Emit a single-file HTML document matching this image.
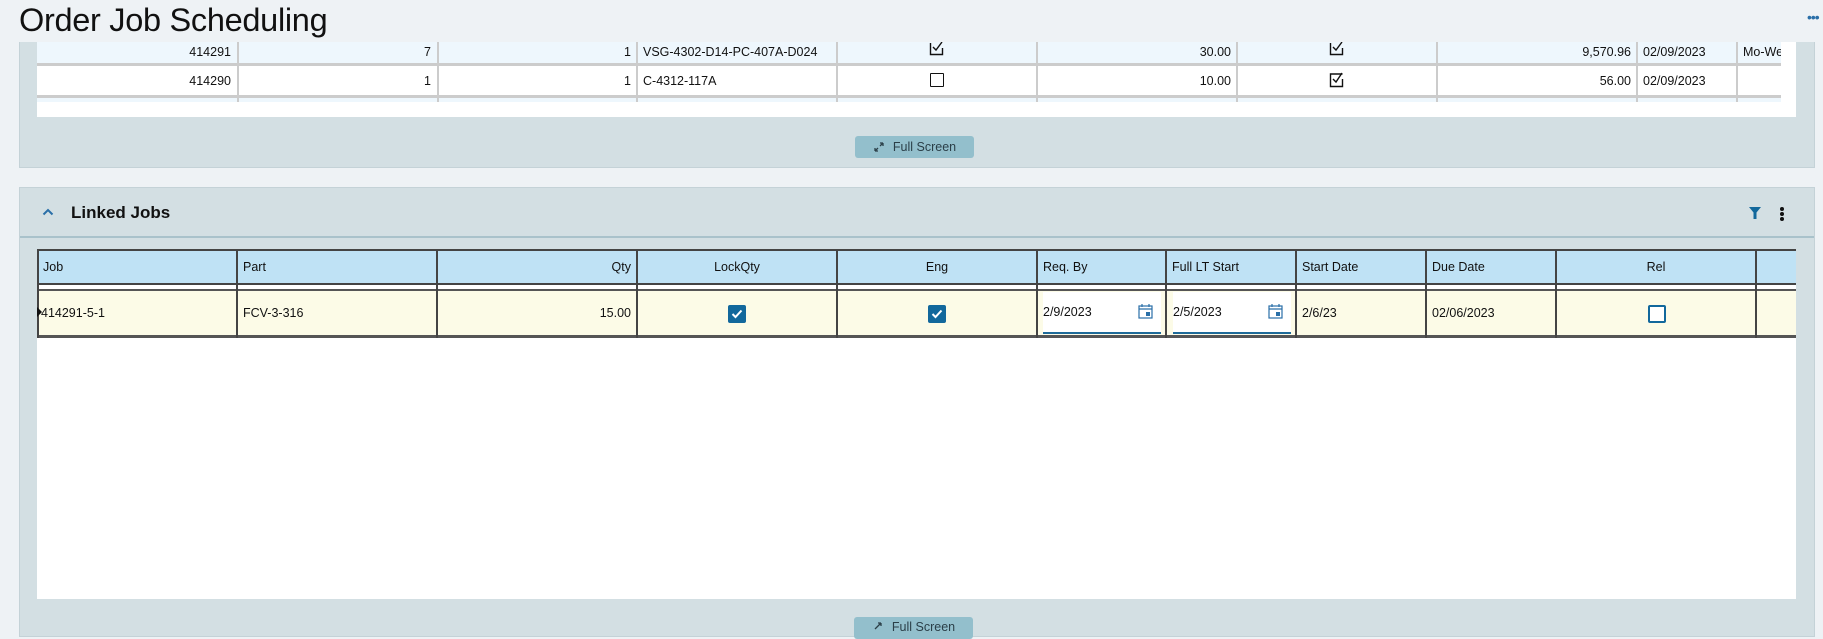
<!DOCTYPE html>
<html><head><meta charset="utf-8"><style>
*{box-sizing:border-box;margin:0;padding:0}
body{width:1823px;height:630px;overflow:hidden;background:#eef2f5;font-family:"Liberation Sans",sans-serif;font-size:12.5px;color:#111;position:relative}
.a{position:absolute}
.title{left:19px;top:0;font-size:32.5px;letter-spacing:-0.3px;color:#111;line-height:40px}
.panel{background:#d3dfe3;border:1px solid #c4d2d7}
.cell{position:absolute;display:flex;align-items:center;padding:0 6px;white-space:nowrap;overflow:hidden}
.r{justify-content:flex-end}.c{justify-content:center}
.btn{background:#93bfcc;border-radius:3px;color:#2b3f48;font-size:12.5px;display:flex;align-items:center;justify-content:center;gap:8px}
.cb{width:18px;height:18px;background:#12689c;border-radius:2px;display:flex;align-items:center;justify-content:center}
</style></head><body>
<div class="a title">Order Job Scheduling</div>
<div class="a" style="left:1807px;top:14px;color:#2a6fa8;font-size:14px;letter-spacing:-1px;line-height:6px">•••</div>

<!-- top panel -->
<div class="a panel" style="left:19px;top:42px;width:1796px;height:126px;border-top:none"></div>
<div class="a" style="left:37px;top:42px;width:1759px;height:75px;background:#fff"></div>
<div class="a" style="left:37px;top:42px;width:1744px;height:21px;background:#eef7fd"></div>
<div class="a" style="left:37px;top:63px;width:1744px;height:3px;background:#cccccc"></div>
<div class="a" style="left:37px;top:95px;width:1744px;height:3px;background:#cccccc"></div>
<div class="a" style="left:37px;top:98px;width:1744px;height:4px;background:#eef7fd"></div>
<div id="tvl"></div>
<div class="cell r" style="left:37px;top:38px;width:200px;height:27px">414291</div>
<div class="cell r" style="left:237px;top:38px;width:200px;height:27px">7</div>
<div class="cell r" style="left:437px;top:38px;width:200px;height:27px">1</div>
<div class="cell" style="left:637px;top:38px;width:200px;height:27px">VSG-4302-D14-PC-407A-D024</div>
<div class="cell r" style="left:1037px;top:38px;width:200px;height:27px">30.00</div>
<div class="cell r" style="left:1437px;top:38px;width:200px;height:27px">9,570.96</div>
<div class="cell" style="left:1637px;top:38px;width:100px;height:27px">02/09/2023</div>
<div class="cell" style="left:1737px;top:38px;width:44px;height:27px">Mo-We</div>
<div class="cell r" style="left:37px;top:66px;width:200px;height:29px">414290</div>
<div class="cell r" style="left:237px;top:66px;width:200px;height:29px">1</div>
<div class="cell r" style="left:437px;top:66px;width:200px;height:29px">1</div>
<div class="cell" style="left:637px;top:66px;width:200px;height:29px">C-4312-117A</div>
<div class="cell r" style="left:1037px;top:66px;width:200px;height:29px">10.00</div>
<div class="cell r" style="left:1437px;top:66px;width:200px;height:29px">56.00</div>
<div class="cell" style="left:1637px;top:66px;width:100px;height:29px">02/09/2023</div>
<svg class="a" style="left:929px;top:42px" width="16" height="14"><path d="M1.5 1v11.5h12V6" fill="none" stroke="#111" stroke-width="1.4"/><path d="M4 5l3 3 6-8" fill="none" stroke="#111" stroke-width="1.4"/></svg>
<div class="a" style="left:930px;top:73px;width:14px;height:14px;border:1.5px solid #111;border-radius:1px"></div>
<svg class="a" style="left:1329px;top:42px" width="16" height="14"><path d="M1.5 1v11.5h12V6" fill="none" stroke="#111" stroke-width="1.4"/><path d="M4 5l3 3 6-8" fill="none" stroke="#111" stroke-width="1.4"/></svg>
<svg class="a" style="left:1329px;top:71px" width="16" height="17"><path d="M13.5 3H1.5v12.5h12V8" fill="none" stroke="#111" stroke-width="1.4"/><path d="M4 8l3 3 6-9" fill="none" stroke="#111" stroke-width="1.4"/></svg>
<div class="a btn" style="left:855px;top:136px;width:119px;height:22px"><svg width="12" height="12"><path d="M2 10l3-3M2 10V7M2 10h3M10 2L7 5M10 2v3M10 2H7" stroke="#2b3f48" stroke-width="1.3" fill="none"/></svg>Full Screen</div>

<!-- bottom panel -->
<div class="a panel" style="left:19px;top:187px;width:1796px;height:450px"></div>
<div class="a" style="left:20px;top:236px;width:1794px;height:2px;background:#a9c2cb"></div>
<svg class="a" style="left:42px;top:207px" width="12" height="10"><path d="M1.5 7.5L6 3l4.5 4.5" stroke="#2a6fa8" stroke-width="2" fill="none"/></svg>
<div class="a" style="left:71px;top:201px;font-size:17px;font-weight:bold;color:#111;line-height:24px">Linked Jobs</div>
<svg class="a" style="left:1749px;top:207px" width="12" height="12"><path d="M0 0h12L7.5 5.5V12h-3V5.5z" fill="#12689c"/></svg>
<div class="a" style="left:1780px;top:207px;width:4px;height:4px;border-radius:2px;background:#111"></div>
<div class="a" style="left:1780px;top:212px;width:4px;height:4px;border-radius:2px;background:#111"></div>
<div class="a" style="left:1780px;top:217px;width:4px;height:4px;border-radius:2px;background:#111"></div>

<div class="a" style="left:37px;top:249px;width:1759px;height:350px;background:#fff"></div>
<div class="a" style="left:37px;top:249px;width:1759px;height:36px;background:#bfe2f5;border-top:2px solid #444;border-bottom:2px solid #444"></div>
<div class="a" style="left:37px;top:289px;width:1759px;height:49px;background:#fcfbe7;border-top:2px solid #555;border-bottom:3px solid #555"></div>
<div id="bvl"></div>
<div class="cell" style="left:37px;top:251px;width:200px;height:32px">Job</div>
<div class="cell" style="left:237px;top:251px;width:200px;height:32px">Part</div>
<div class="cell r" style="left:437px;top:251px;width:200px;height:32px">Qty</div>
<div class="cell c" style="left:637px;top:251px;width:200px;height:32px">LockQty</div>
<div class="cell c" style="left:837px;top:251px;width:200px;height:32px">Eng</div>
<div class="cell" style="left:1037px;top:251px;width:129px;height:32px">Req. By</div>
<div class="cell" style="left:1166px;top:251px;width:130px;height:32px">Full LT Start</div>
<div class="cell" style="left:1296px;top:251px;width:130px;height:32px">Start Date</div>
<div class="cell" style="left:1426px;top:251px;width:130px;height:32px">Due Date</div>
<div class="cell c" style="left:1556px;top:251px;width:200px;height:32px">Rel</div>

<svg class="a" style="left:37px;top:307px" width="6" height="10"><path d="M0 0l5 5-5 5z" fill="#111"/></svg>
<div class="cell" style="left:37px;top:291px;width:200px;height:44px;padding-left:4px">414291-5-1</div>
<div class="cell" style="left:237px;top:291px;width:200px;height:44px">FCV-3-316</div>
<div class="cell r" style="left:437px;top:291px;width:200px;height:44px">15.00</div>
<div class="a cb" style="left:728px;top:305px"><svg width="12" height="10"><path d="M1.5 5l3 3 6-6.5" stroke="#fff" stroke-width="2" fill="none"/></svg></div>
<div class="a cb" style="left:928px;top:305px"><svg width="12" height="10"><path d="M1.5 5l3 3 6-6.5" stroke="#fff" stroke-width="2" fill="none"/></svg></div>
<div class="a" style="left:1043px;top:292px;width:118px;height:42px;background:#fff;border-bottom:2px solid #1e6a99;display:flex;align-items:center">2/9/2023</div>
<div class="a" style="left:1173px;top:292px;width:118px;height:42px;background:#fff;border-bottom:2px solid #1e6a99;display:flex;align-items:center">2/5/2023</div>
<svg class="a" style="left:1138px;top:303px" width="15" height="16"><rect x="1" y="3" width="13" height="12" fill="none" stroke="#2a6fa8" stroke-width="1.2"/><path d="M1 6h13M4 1v3M11 1v3" stroke="#2a6fa8" stroke-width="1.2"/><rect x="8" y="9" width="4" height="4" fill="#2a6fa8"/></svg>
<svg class="a" style="left:1268px;top:303px" width="15" height="16"><rect x="1" y="3" width="13" height="12" fill="none" stroke="#2a6fa8" stroke-width="1.2"/><path d="M1 6h13M4 1v3M11 1v3" stroke="#2a6fa8" stroke-width="1.2"/><rect x="8" y="9" width="4" height="4" fill="#2a6fa8"/></svg>
<div class="cell" style="left:1296px;top:291px;width:130px;height:44px">2/6/23</div>
<div class="cell" style="left:1426px;top:291px;width:130px;height:44px">02/06/2023</div>
<div class="a" style="left:1648px;top:305px;width:18px;height:18px;border:2px solid #12689c;border-radius:2px;background:#fff"></div>

<div class="a btn" style="left:854px;top:617px;width:119px;height:22px;align-items:flex-start;padding-top:3px"><svg width="12" height="12"><path d="M3 9l6-6M9 3v3M9 3H6" stroke="#2b3f48" stroke-width="1.3" fill="none"/></svg>Full Screen</div>

<script>
var t=document.getElementById('tvl'),h='';
[237,437,636,836,1036,1236,1436,1636,1736].forEach(function(x){h+='<div class="a" style="left:'+x+'px;top:42px;width:2px;height:60px;background:#cccccc"></div>'});
t.outerHTML=h;
var b=document.getElementById('bvl');h='';
[37,236,436,636,836,1036,1165,1295,1425,1555,1755].forEach(function(x){h+='<div class="a" style="left:'+x+'px;top:249px;width:2px;height:89px;background:#444"></div>'});
b.outerHTML=h;
</script>
</body></html>
